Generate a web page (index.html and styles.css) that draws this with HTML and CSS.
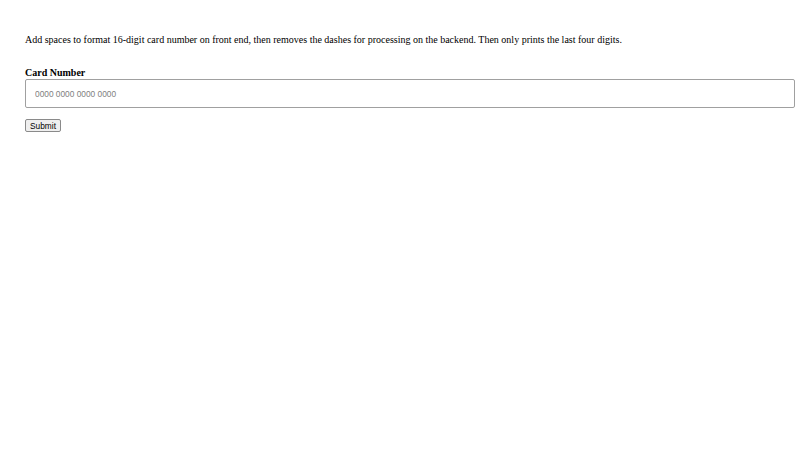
FILE: index.html
```html
<!DOCTYPE html>
<html>
<head>
<meta charset="utf-8">
<link rel="stylesheet" href="styles.css">
</head>
<body>
<div class="page">
  <p class="intro">Add spaces to format 16-digit card number on front end, then removes the dashes for processing on the backend. Then only prints the last four digits.</p>
  <form class="card-form">
    <label class="label" for="card">Card Number</label>
    <input class="card-input" id="card" type="text" placeholder="0000 0000 0000 0000">
    <button class="submit" type="button">Submit</button>
  </form>
</div>
</body>
</html>
```
FILE: styles.css
```css
html, body {
  margin: 0;
  background: #fff;
}
.page {
  padding: 33px 5px 0 25px;
  font-family: "Liberation Serif", "Times New Roman", serif;
  font-size: 10px;
  color: #000;
}
.intro {
  margin: 0 0 19px 0;
  line-height: 14px;
}
.card-form {
  display: flex;
  flex-direction: column;
  align-items: flex-start;
}
.label {
  font-weight: bold;
  line-height: 13px;
}
.card-input {
  box-sizing: border-box;
  width: 100%;
  height: 29px;
  margin: 0 0 11px 0;
  padding: 0 9px;
  border: 1px solid #a0a0a0;
  border-radius: 2px;
  font-family: "Liberation Sans", Arial, sans-serif;
  font-size: 8.33px;
  color: #000;
}
.card-input::placeholder {
  color: #808080;
}
.submit {
  box-sizing: border-box;
  font-family: "Liberation Sans", Arial, sans-serif;
  font-size: 8.33px;
  line-height: 10px;
  padding: 1px 4px;
  height: 13px;
  width: 36px;
  border: 1px solid #8a8a8a;
  border-radius: 2px;
  background: #efefef;
  color: #000;
}
```
